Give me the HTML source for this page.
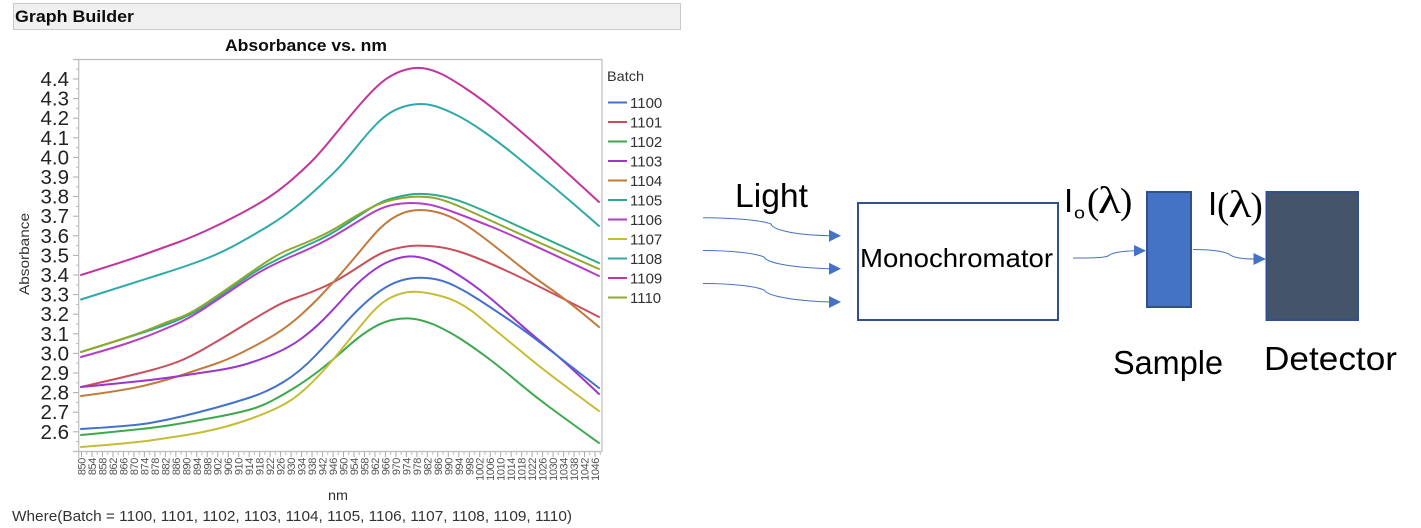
<!DOCTYPE html>
<html>
<head>
<meta charset="utf-8">
<style>
html,body{margin:0;padding:0;background:#fff;width:1421px;height:528px;overflow:hidden}
svg{display:block;font-family:"Liberation Sans",sans-serif}
.c{fill:none;stroke-width:2;stroke-linejoin:round;stroke-linecap:round}
.yl text{font-size:20.5px;fill:#222;text-anchor:end}
.xl text{font-size:11px;fill:#555;text-anchor:end;letter-spacing:-.4px}
.lg text{font-size:15px;fill:#333}
.lg line{stroke-width:2}
.fl{fill:none;stroke:#4472c4;stroke-width:1}
.hd{fill:#4472c4}
.s{font-family:"Liberation Serif",serif;fill:#000}
</style>
</head>
<body>
<svg width="1421" height="528" viewBox="0 0 1421 528" xmlns="http://www.w3.org/2000/svg">
<defs>
<filter id="b" x="-5%" y="-5%" width="110%" height="110%"><feGaussianBlur stdDeviation="0.3"/></filter>
<pattern id="tx" patternUnits="userSpaceOnUse" x="81" y="451" width="10.48" height="8">
<rect x="0" y="0" width="1" height="6" fill="#aaa"/><rect x="5.24" y="0" width="1" height="4" fill="#bbb"/>
</pattern>
<pattern id="ty" patternUnits="userSpaceOnUse" x="72" y="78.5" width="8" height="19.6">
<rect x="1" y="0" width="6" height="1" fill="#aaa"/><rect x="4" y="9.8" width="3" height="1" fill="#bbb"/>
</pattern>
</defs>
<g filter="url(#b)">
<rect x="13.5" y="3.5" width="667" height="26" fill="#f0f0f0" stroke="#c9c9c9"/>
<text x="15" y="22" font-size="17" font-weight="700" fill="#111" textLength="119" lengthAdjust="spacingAndGlyphs">Graph Builder</text>
<text x="225" y="51" font-size="17" font-weight="700" fill="#111" textLength="162" lengthAdjust="spacingAndGlyphs">Absorbance vs. nm</text>
<text transform="translate(29,295) rotate(-90)" font-size="14" fill="#333" textLength="82" lengthAdjust="spacingAndGlyphs">Absorbance</text>

<rect x="72" y="60" width="7" height="391" fill="url(#ty)"/>
<rect x="79" y="452" width="523" height="7" fill="url(#tx)"/>
<path d="M73 59.5H602V451.5H73M78.7 59.5V458" fill="none" stroke="#bdbdbd" stroke-width="1.2"/>

<g class="yl">
<text x="69" y="86">4.4</text><text x="69" y="105.6">4.3</text><text x="69" y="125.2">4.2</text><text x="69" y="144.8">4.1</text><text x="69" y="164.4">4.0</text><text x="69" y="184">3.9</text><text x="69" y="203.6">3.8</text><text x="69" y="223.2">3.7</text><text x="69" y="242.8">3.6</text><text x="69" y="262.4">3.5</text><text x="69" y="282">3.4</text><text x="69" y="301.6">3.3</text><text x="69" y="321.2">3.2</text><text x="69" y="340.8">3.1</text><text x="69" y="360.4">3.0</text><text x="69" y="380">2.9</text><text x="69" y="399.6">2.8</text><text x="69" y="419.2">2.7</text><text x="69" y="438.8">2.6</text>
</g>

<g class="xl">
<text transform="translate(85.5,458) rotate(-90)">850</text><text transform="translate(96,458) rotate(-90)">854</text><text transform="translate(106.5,458) rotate(-90)">858</text><text transform="translate(116.9,458) rotate(-90)">862</text><text transform="translate(127.4,458) rotate(-90)">866</text><text transform="translate(137.9,458) rotate(-90)">870</text><text transform="translate(148.4,458) rotate(-90)">874</text><text transform="translate(158.9,458) rotate(-90)">878</text><text transform="translate(169.3,458) rotate(-90)">882</text><text transform="translate(179.8,458) rotate(-90)">886</text><text transform="translate(190.3,458) rotate(-90)">890</text><text transform="translate(200.8,458) rotate(-90)">894</text><text transform="translate(211.3,458) rotate(-90)">898</text><text transform="translate(221.7,458) rotate(-90)">902</text><text transform="translate(232.2,458) rotate(-90)">906</text><text transform="translate(242.7,458) rotate(-90)">910</text><text transform="translate(253.2,458) rotate(-90)">914</text><text transform="translate(263.7,458) rotate(-90)">918</text><text transform="translate(274.1,458) rotate(-90)">922</text><text transform="translate(284.6,458) rotate(-90)">926</text><text transform="translate(295.1,458) rotate(-90)">930</text><text transform="translate(305.6,458) rotate(-90)">934</text><text transform="translate(316.1,458) rotate(-90)">938</text><text transform="translate(326.5,458) rotate(-90)">942</text><text transform="translate(337,458) rotate(-90)">946</text><text transform="translate(347.5,458) rotate(-90)">950</text><text transform="translate(358,458) rotate(-90)">954</text><text transform="translate(368.5,458) rotate(-90)">958</text><text transform="translate(378.9,458) rotate(-90)">962</text><text transform="translate(389.4,458) rotate(-90)">966</text><text transform="translate(399.9,458) rotate(-90)">970</text><text transform="translate(410.4,458) rotate(-90)">974</text><text transform="translate(420.9,458) rotate(-90)">978</text><text transform="translate(431.3,458) rotate(-90)">982</text><text transform="translate(441.8,458) rotate(-90)">986</text><text transform="translate(452.3,458) rotate(-90)">990</text><text transform="translate(462.8,458) rotate(-90)">994</text><text transform="translate(473.3,458) rotate(-90)">998</text><text transform="translate(483.7,458) rotate(-90)">1002</text><text transform="translate(494.2,458) rotate(-90)">1006</text><text transform="translate(504.7,458) rotate(-90)">1010</text><text transform="translate(515.2,458) rotate(-90)">1014</text><text transform="translate(525.7,458) rotate(-90)">1018</text><text transform="translate(536.1,458) rotate(-90)">1022</text><text transform="translate(546.6,458) rotate(-90)">1026</text><text transform="translate(557.1,458) rotate(-90)">1030</text><text transform="translate(567.6,458) rotate(-90)">1034</text><text transform="translate(578.1,458) rotate(-90)">1038</text><text transform="translate(588.5,458) rotate(-90)">1042</text><text transform="translate(599,458) rotate(-90)">1046</text>
</g>

<text x="328" y="500" font-size="14" fill="#333" textLength="20" lengthAdjust="spacingAndGlyphs">nm</text>
<text x="12" y="521" font-size="15" fill="#333" textLength="560" lengthAdjust="spacingAndGlyphs">Where(Batch = 1100, 1101, 1102, 1103, 1104, 1105, 1106, 1107, 1108, 1109, 1110)</text>

<!-- curves -->
<path class="c" stroke="#2fa98c" d="M81 352Q143 333 166.5 324.5Q190 316 206.5 305Q223 294 240 282Q257 270 268.5 264Q280 258 291.5 252.5Q303 247 316.5 241Q330 235 343.5 226Q357 217 368.5 209.5Q380 202 390 199Q400 196 410 194.5Q420 193 435 195Q450 197 466.5 203.5Q483 210 508 221.5Q533 233 599 263"/>
<path class="c" stroke="#8ea92e" d="M81 352Q110 343 126.5 337.5Q143 332 155 327Q167 322 178.5 318Q190 314 206.5 303Q223 292 240 280Q257 268 268.5 260.5Q280 253 291.5 248.5Q303 244 316.5 238Q330 232 343.5 223.5Q357 215 368.5 209Q380 203 390 200.5Q400 198 410 197Q420 196 431.5 197.5Q443 199 463 208Q483 217 508 228.5Q533 240 599 269"/>
<path class="c" stroke="#b23fc4" d="M81 357Q110 349 126.5 343.5Q143 338 154 333.5Q165 329 177.5 323.5Q190 318 206.5 307Q223 296 240 284.5Q257 273 270 266.5Q283 260 295 255Q307 250 320 243.5Q333 237 345 229.5Q357 222 368.5 215Q380 208 390 205.5Q400 203 410 203Q420 203 428.5 204.5Q437 206 452 211.5Q467 217 492 227Q517 237 599 276"/>
<path class="c" stroke="#c9505c" d="M81 387Q133 375 150 370.5Q167 366 178.5 361.5Q190 357 206.5 347.5Q223 338 240 327.5Q257 317 270 309.5Q283 302 295 298Q307 294 320 288.5Q333 283 345 275.5Q357 268 368.5 260.5Q380 253 390 250Q400 247 410 246Q420 245 435 246.5Q450 248 466.5 254Q483 260 508 271.5Q533 283 599 317"/>
<path class="c" stroke="#c27a3d" d="M81 396Q127 390 147 385Q167 380 183.5 374.5Q200 369 213.5 364.5Q227 360 242 352.5Q257 345 270 337.5Q283 330 295 320Q307 310 320 296.5Q333 283 345 269Q357 255 368.5 241Q380 227 390 220Q400 213 410 211Q420 209 431.5 211Q443 213 455 219Q467 225 483.5 237.5Q500 250 516.5 263.5Q533 277 550 288.5Q567 300 599 327"/>
<path class="c" stroke="#9c35cb" d="M81 387Q133 382 150 380Q167 378 183.5 375.5Q200 373 216.5 370.5Q233 368 246.5 364Q260 360 275 353.5Q290 347 301.5 338.5Q313 330 323 320Q333 310 345 296.5Q357 283 368.5 274Q380 265 390 261Q400 257 408 256.5Q416 256 426.5 259Q437 262 452 271Q467 280 480 290Q493 300 511.5 316.5Q530 333 546.5 346.5Q563 360 599 394"/>
<path class="c" stroke="#4272cc" d="M81 429Q133 426 150 423Q167 420 183.5 416Q200 412 216.5 407.5Q233 403 250 397.5Q267 392 283.5 382Q300 372 316.5 354.5Q333 337 345 323.5Q357 310 368.5 300Q380 290 390 285Q400 280 410 278.5Q420 277 431.5 278.5Q443 280 455 286Q467 292 478.5 299.5Q490 307 503.5 316Q517 325 533.5 337.5Q550 350 599 388"/>
<path class="c" stroke="#3ea94e" d="M81 435Q133 430 150 428Q167 426 183.5 423Q200 420 216.5 417Q233 414 246.5 410.5Q260 407 271.5 401Q283 395 295 387.5Q307 380 320 370Q333 360 345 349Q357 338 368.5 330.5Q380 323 390 320.5Q400 318 410 318.5Q420 319 435 325Q450 332 461.5 339.5Q473 347 486.5 357Q500 367 516.5 381Q533 395 550 407.5Q567 420 599 443"/>
<path class="c" stroke="#c6bd36" d="M81 447Q133 443 150 440.5Q167 438 183.5 435.5Q200 433 216.5 429Q233 425 250 419Q267 413 280 406.5Q293 400 304 390Q315 380 324 370Q333 360 345 345Q357 330 368.5 316.5Q380 303 390 298Q400 293 409 292Q418 291 432.5 294Q447 297 457 302Q467 307 475 313.5Q483 320 500 334Q517 348 533.5 361.5Q550 375 599 411"/>
<path class="c" stroke="#2faaa9" d="M81 299.5Q133 283 161.5 274Q190 265 206.5 258.5Q223 252 240 242.5Q257 233 270 225Q283 217 295 207.5Q307 198 322 184Q337 170 343.5 162.5Q350 155 358.5 144.5Q367 134 375 125.5Q383 117 391.5 112Q400 107 410.5 105Q421 103 430.5 105Q440 107 453.5 113.5Q467 120 483.5 131.5Q500 143 516.5 156.5Q533 170 550 184Q567 198 599 226"/>
<path class="c" stroke="#c3369c" d="M81 275Q129 260 147 253.5Q165 247 177.5 242.5Q190 238 206.5 230.5Q223 223 240 214Q257 205 268.5 197.5Q280 190 291.5 180Q303 170 311.5 161.5Q320 153 335 134.5Q350 116 360 104.5Q370 93 377.5 86Q385 79 392.5 75Q400 71 408.5 69Q417 67 425 68.5Q433 70 441.5 74Q450 78 466.5 89Q483 100 500 114Q517 128 533.5 142.5Q550 157 599 202"/>

<text x="607" y="81" font-size="14" fill="#333" textLength="37" lengthAdjust="spacingAndGlyphs">Batch</text>
<g class="lg">
<line x1="608" x2="627" y1="102.5" y2="102.5" stroke="#4272cc"/><text x="630" y="108">1100</text>
<line x1="608" x2="627" y1="122" y2="122" stroke="#c9505c"/><text x="630" y="127.5">1101</text>
<line x1="608" x2="627" y1="141.5" y2="141.5" stroke="#3ea94e"/><text x="630" y="147">1102</text>
<line x1="608" x2="627" y1="161" y2="161" stroke="#9c35cb"/><text x="630" y="166.5">1103</text>
<line x1="608" x2="627" y1="180.5" y2="180.5" stroke="#c27a3d"/><text x="630" y="186">1104</text>
<line x1="608" x2="627" y1="200" y2="200" stroke="#2fa98c"/><text x="630" y="205.5">1105</text>
<line x1="608" x2="627" y1="219.5" y2="219.5" stroke="#b23fc4"/><text x="630" y="225">1106</text>
<line x1="608" x2="627" y1="239" y2="239" stroke="#c6bd36"/><text x="630" y="244.5">1107</text>
<line x1="608" x2="627" y1="258.5" y2="258.5" stroke="#2faaa9"/><text x="630" y="264">1108</text>
<line x1="608" x2="627" y1="278" y2="278" stroke="#c3369c"/><text x="630" y="283.5">1109</text>
<line x1="608" x2="627" y1="297.5" y2="297.5" stroke="#8ea92e"/><text x="630" y="303">1110</text>
</g>
</g>

<!-- diagram -->
<text x="735" y="207" font-size="33" fill="#000" textLength="73" lengthAdjust="spacingAndGlyphs">Light</text>
<rect x="858" y="203" width="200" height="117" fill="#fff" stroke="#2f528f" stroke-width="2"/>
<text x="860" y="267" font-size="26" fill="#000" textLength="193" lengthAdjust="spacingAndGlyphs">Monochromator</text>

<path class="fl" d="M703 217.7C735 218 760 220 771 224C773 231 800 235 830 235.7"/>
<polygon class="hd" points="829,229.7 841,235.7 829,241.7"/>
<path class="fl" d="M703 250.5C730 250.5 755 253 764 257C767 264 800 268 830 268.7"/>
<polygon class="hd" points="829,262.7 841,268.7 829,274.7"/>
<path class="fl" d="M703 283.5C730 283.5 755 286 764 290C768 297 800 301 830 302"/>
<polygon class="hd" points="829,296 841,302 829,308"/>

<text x="1064" y="212" font-size="33" fill="#000">I</text>
<text x="1074" y="218.5" font-size="17" fill="#000" textLength="11" lengthAdjust="spacingAndGlyphs">o</text>
<text class="s" x="1087" y="213.5" font-size="37">(</text>
<text class="s" x="1098" y="213" font-size="38" textLength="23" lengthAdjust="spacingAndGlyphs">λ</text>
<text class="s" x="1120" y="213.5" font-size="37">)</text>

<rect x="1147" y="192" width="44" height="115" fill="#4472c4" stroke="#2f528f" stroke-width="2"/>
<path class="fl" d="M1073 258C1090 258 1103 258 1108 256C1112 252 1125 251 1135 250.7"/>
<polygon class="hd" points="1134,245 1146,250.7 1134,256.5"/>

<text x="1208" y="215" font-size="33" fill="#000">I</text>
<text class="s" x="1217" y="218" font-size="37">(</text>
<text class="s" x="1228.5" y="217" font-size="38" textLength="23" lengthAdjust="spacingAndGlyphs">λ</text>
<text class="s" x="1250.5" y="218" font-size="37">)</text>

<rect x="1266.5" y="192" width="91.5" height="128" fill="#44546a" stroke="#2f528f" stroke-width="2"/>
<path class="fl" d="M1193 249.5C1210 249.5 1222 251 1229 254C1233 258 1245 259 1255 259"/>
<polygon class="hd" points="1253.5,253 1266,259 1253.5,265"/>

<text x="1113" y="374" font-size="33" fill="#000" textLength="110" lengthAdjust="spacingAndGlyphs">Sample</text>
<text x="1264" y="370" font-size="33" fill="#000" textLength="133" lengthAdjust="spacingAndGlyphs">Detector</text>
</svg>
</body>
</html>
